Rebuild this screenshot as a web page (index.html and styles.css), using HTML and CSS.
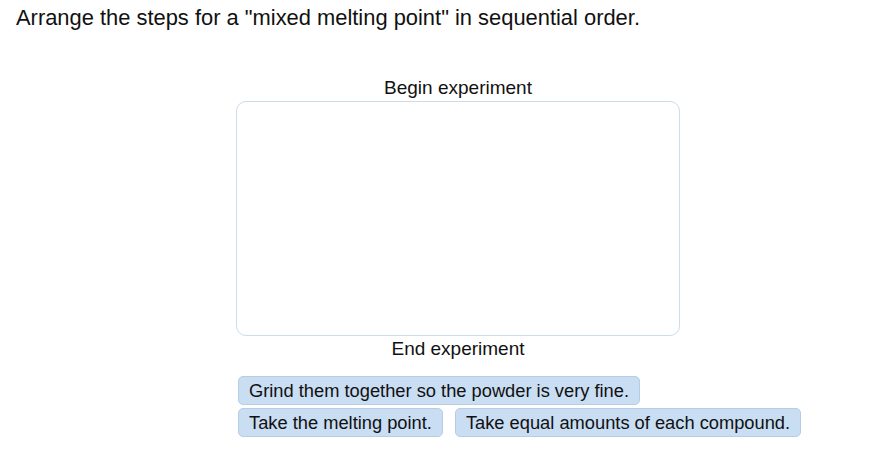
FILE: index.html
```html
<!DOCTYPE html>
<html>
<head>
  <title>Sequence Question</title>
  <link rel="stylesheet" href="styles.css">
</head>
<body>
  <p class="prompt">Arrange the steps for a "mixed melting point" in sequential order.</p>

  <div class="sequence">
    <div class="label">Begin experiment</div>
    <div class="dropzone"></div>
    <div class="label">End experiment</div>
  </div>

  <div class="choices">
    <div class="chip">Grind them together so the powder is very fine.</div>
    <div class="chip">Take the melting point.</div>
    <div class="chip">Take equal amounts of each compound.</div>
  </div>
</body>
</html>
```

FILE: styles.css
```css
body {
  margin: 0;
  font-family: "Liberation Sans", Arial, sans-serif;
  color: #111;
  background-color: white;
}

.prompt {
  margin: 0;
  padding: 5px 0 0 16px;
  font-size: 21.9px;
  line-height: 26px;
}

.sequence {
  width: 444px;
  margin: 46px 0 0 236px;
}

.label {
  text-align: center;
  font-size: 19px;
  line-height: 22px;
}

.dropzone {
  height: 233px;
  border: 1px solid #cbdcea;
  border-radius: 10px;
  margin: 2px 0;
}

.choices {
  display: flex;
  flex-wrap: wrap;
  gap: 3px 12px;
  width: 590px;
  margin: 16px 0 0 238px;
}

.chip {
  background-color: #c9ddf3;
  border: 1px solid #b6cde6;
  border-radius: 5px;
  padding: 3px 10px;
  font-size: 18.3px;
  line-height: 21px;
}
```
